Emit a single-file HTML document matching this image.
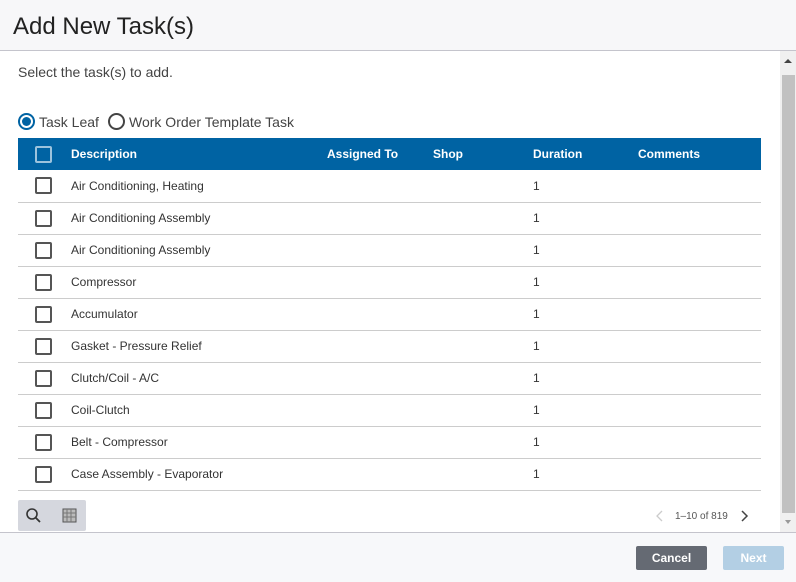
<!DOCTYPE html>
<html><head><style>
*{box-sizing:border-box;margin:0;padding:0}
body{width:796px;height:582px;overflow:hidden;background:#fff;font-family:"Liberation Sans",sans-serif;color:#333;position:relative}
.hdr{position:absolute;left:0;top:0;width:796px;height:51px;background:#f7f7f9;border-bottom:1px solid #c4c4cc}
.hdr h1{position:absolute;left:13px;top:13px;font-size:24px;font-weight:normal;color:#222}
.sub{position:absolute;left:18px;top:64px;font-size:14px;color:#444}
.radio{position:absolute;top:113px;font-size:14px;color:#444;display:flex;align-items:center}
.rc{width:17px;height:17px;border-radius:50%;border:2px solid #444;margin-right:4px;position:relative}
.rc.on{border-color:#0063a3}
.rc.on::after{content:"";position:absolute;left:2px;top:2px;width:9px;height:9px;border-radius:50%;background:#0063a3}
table{position:absolute;left:18px;top:138px;width:743px;border-collapse:collapse;font-size:12px}
th{background:#0063a3;color:#fff;height:32px;text-align:left;font-weight:bold;font-size:12px}
td{height:32px;border-bottom:1px solid #ccc;color:#333}
.cb{display:inline-block;width:17px;height:17px;border:2px solid #555;border-radius:2px;vertical-align:middle;margin-left:17px}
th .cb{border-color:#9cc3dd}
.tb{position:absolute;left:18px;top:500px;width:68px;height:31px;background:#d5d7de;border-radius:2px}
.pg{position:absolute;left:654px;top:511px;font-size:10px;color:#555}
.sb{position:absolute;left:780px;top:51px;width:16px;height:481px;background:#f0f0f0}
.th{position:absolute;left:782px;top:75px;width:13px;height:438px;background:#c1c1c1}
.ft{position:absolute;left:0;top:532px;width:796px;height:50px;background:#f7f8fa;border-top:1px solid #c4c4cc}
.btn{position:absolute;top:546px;height:24px;font-size:12px;font-weight:bold;color:#fff;text-align:center;line-height:24px;border-radius:2px}
</style></head><body>
<div class="hdr"><h1>Add New Task(s)</h1></div>
<div class="sub">Select the task(s) to add.</div>
<div class="radio" style="left:18px"><span class="rc on"></span>Task Leaf</div>
<div class="radio" style="left:108px"><span class="rc"></span>Work Order Template Task</div>
<table>
<tr><th style="width:53px"><span class="cb"></span></th><th style="width:256px">Description</th><th style="width:106px">Assigned To</th><th style="width:100px">Shop</th><th style="width:105px">Duration</th><th>Comments</th></tr>
<tr><td><span class="cb"></span></td><td>Air Conditioning, Heating</td><td></td><td></td><td>1</td><td></td></tr>
<tr><td><span class="cb"></span></td><td>Air Conditioning Assembly</td><td></td><td></td><td>1</td><td></td></tr>
<tr><td><span class="cb"></span></td><td>Air Conditioning Assembly</td><td></td><td></td><td>1</td><td></td></tr>
<tr><td><span class="cb"></span></td><td>Compressor</td><td></td><td></td><td>1</td><td></td></tr>
<tr><td><span class="cb"></span></td><td>Accumulator</td><td></td><td></td><td>1</td><td></td></tr>
<tr><td><span class="cb"></span></td><td>Gasket - Pressure Relief</td><td></td><td></td><td>1</td><td></td></tr>
<tr><td><span class="cb"></span></td><td>Clutch/Coil - A/C</td><td></td><td></td><td>1</td><td></td></tr>
<tr><td><span class="cb"></span></td><td>Coil-Clutch</td><td></td><td></td><td>1</td><td></td></tr>
<tr><td><span class="cb"></span></td><td>Belt - Compressor</td><td></td><td></td><td>1</td><td></td></tr>
<tr><td><span class="cb"></span></td><td>Case Assembly - Evaporator</td><td></td><td></td><td>1</td><td></td></tr>
</table>
<div class="tb">
<svg width="68" height="31" style="position:absolute;left:0;top:0">
<circle cx="14" cy="14" r="5" fill="none" stroke="#333" stroke-width="1.6"/><line x1="18" y1="18" x2="22" y2="22" stroke="#333" stroke-width="1.8"/>
<rect x="45" y="9" width="13" height="13" fill="#bbb" stroke="#555"/><line x1="49" y1="9" x2="49" y2="22" stroke="#777"/><line x1="53" y1="9" x2="53" y2="22" stroke="#777"/><line x1="45" y1="13" x2="58" y2="13" stroke="#777"/><line x1="45" y1="17" x2="58" y2="17" stroke="#777"/>
</svg></div>
<svg style="position:absolute;left:654px;top:509px" width="12" height="14"><path d="M8 2 L3 7 L8 12" fill="none" stroke="#ccc" stroke-width="1.3"/></svg>
<div class="pg" style="left:675px">1–10 of 819</div>
<svg style="position:absolute;left:738px;top:509px" width="12" height="14"><path d="M4 2 L9 7 L4 12" fill="none" stroke="#444" stroke-width="1.5"/></svg>
<div class="sb"></div><div class="th"></div>
<svg style="position:absolute;left:783px;top:57px" width="10" height="8"><path d="M1 6 L5 2 L9 6Z" fill="#444"/></svg>
<svg style="position:absolute;left:783px;top:518px" width="10" height="8"><path d="M2 2 L5 6 L8 2Z" fill="#999"/></svg>
<div class="ft"></div>
<div class="btn" style="left:636px;width:71px;background:#656a73">Cancel</div>
<div class="btn" style="left:723px;width:61px;background:#b3cfe4">Next</div>
</body></html>
